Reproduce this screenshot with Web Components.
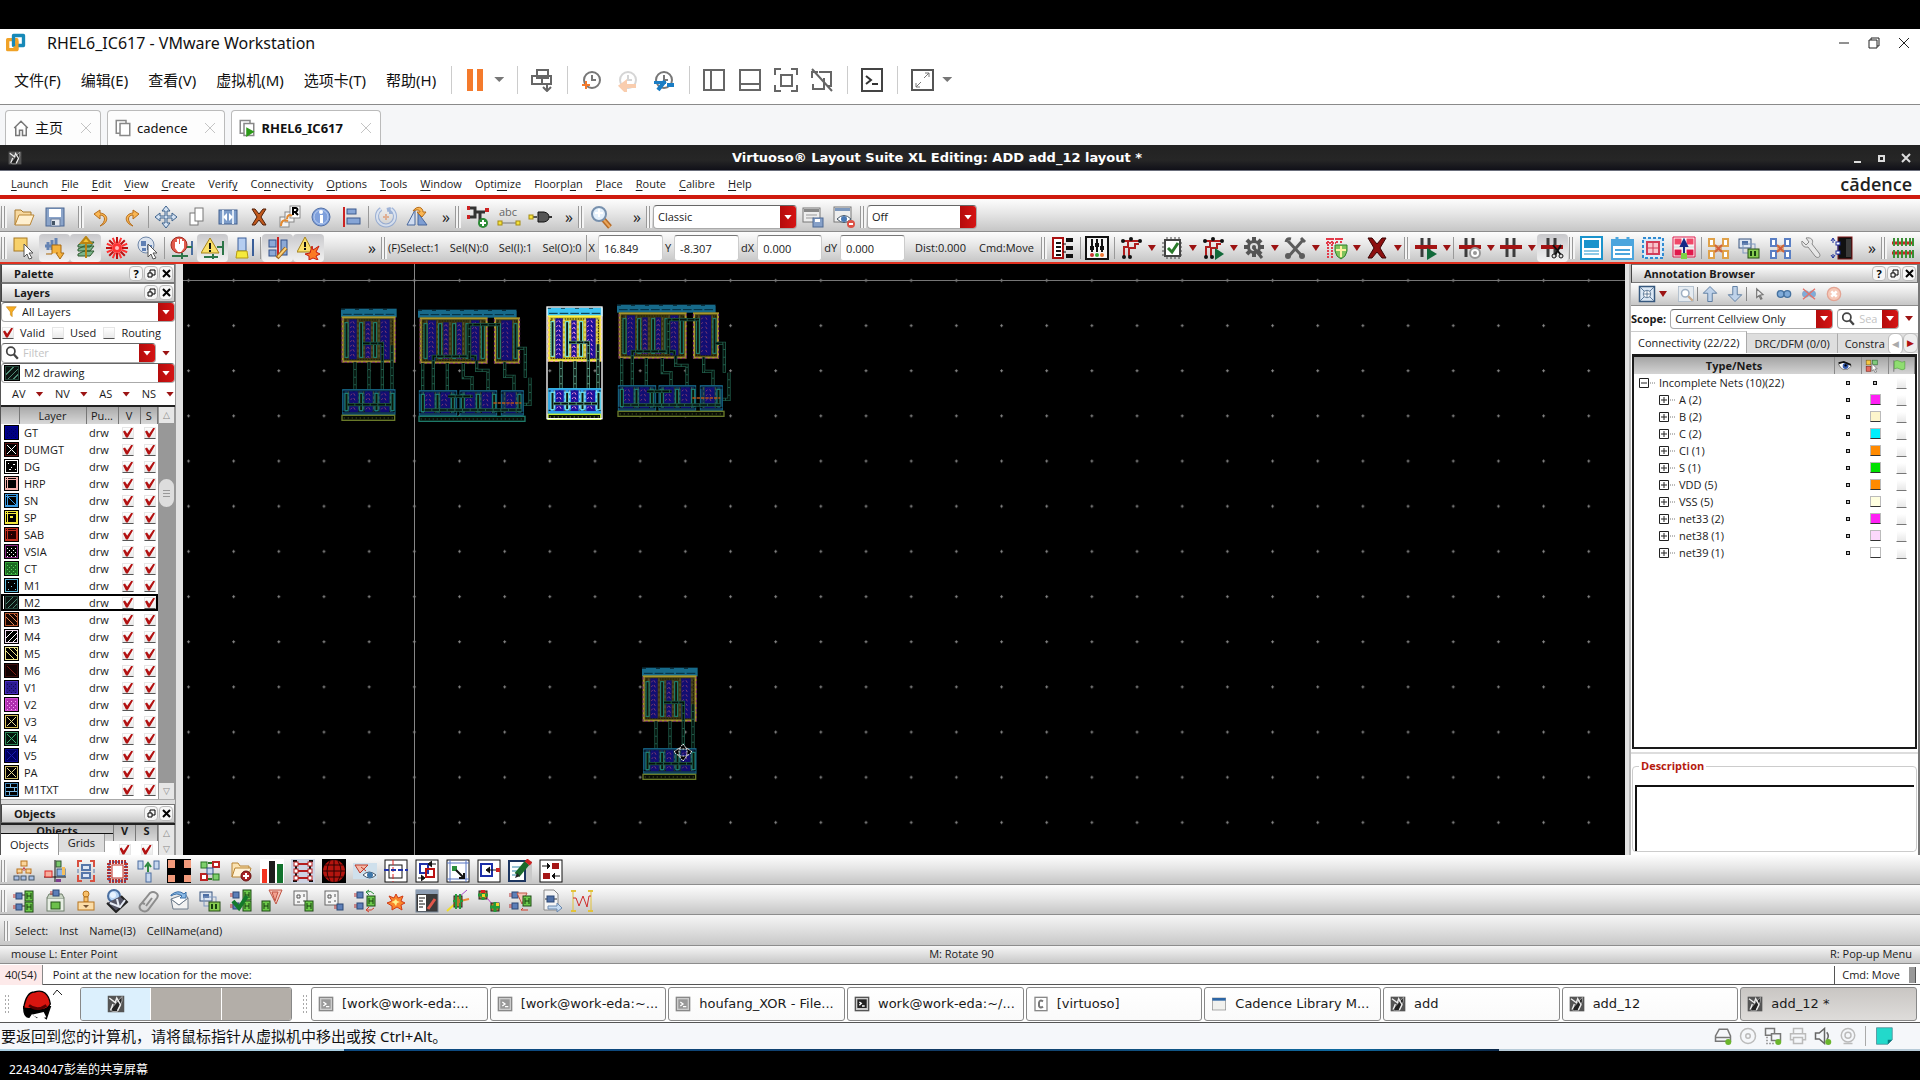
<!DOCTYPE html>
<html lang="zh-CN">
  <head>
    <meta charset="utf-8">
    <title>RHEL6_IC617 - VMware Workstation</title>
    <meta name="viewport" content="width=device-width, initial-scale=1">
    <style>
      html,
      body {
        margin: 0;
        padding: 0;
        height: 100%;
        background: #000;
      }
      body {
        display: flex;
        flex-direction: column;
        overflow: hidden;
        font: 11px/16px "Open Sans", "Noto Sans", sans-serif;
        color: #1a1a1a;
      }
      .letterbox {
        height: 29px;
      }
      .work {
        flex: 1;
        min-height: 0;
        display: flex;
        background: #e4e4e4;
      }
      layout-canvas {
        flex: 1;
        min-width: 0;
      }
      .share {
        height: 29px;
        box-sizing: border-box;
        padding: 8px 9px;
        border-top: 2px solid #000;
        background: #000;
        color: #fff;
        font: 12px/18px "Noto Sans", "Noto Sans CJK SC", sans-serif;
      }
    </style>
  </head>
  <body>
    <div class="letterbox"></div>
    <vm-title>RHEL6_IC617 - VMware Workstation</vm-title>
    <vm-menu></vm-menu>
    <vm-tabs></vm-tabs>
    <app-title>Virtuoso® Layout Suite XL Editing: ADD add_12 layout *</app-title>
    <app-menu></app-menu>
    <tool-bar tall>
      <tool-strip items="# folder save _ # undo redo | move copy stretch delete rcopy info align | rotate flip >> # create abc pin >> # zoom _ >> #"></tool-strip>
      <drop-down label="Workspace" value="Classic" size="wide"></drop-down>
      <tool-strip items="wssave wsview #"></tool-strip>
      <drop-down label="Filter" value="Off" size="mid"></drop-down>
    </tool-bar>
    <tool-bar edge>
      <tool-strip items="# select route* layers* burst lasso | stop warn* lamp | slice* spark* ___ >> #"></tool-strip>
      <cursor-readout></cursor-readout>
      <tool-strip items="# list | sliders | wire+ chip+ wirego+ gear+ tools+ guard+ cross+ # busgo+ | busgear+ bus+ buscut* # form calendar dashed quad | nodesa stack nodesb wrench black >> # comb"></tool-strip>
    </tool-bar>
    <div class="work">
      <layer-palette></layer-palette>
      <layout-canvas></layout-canvas>
      <annotation-browser></annotation-browser>
    </div>
    <tool-bar>
      <tool-strip items="# tree place brackets ring arrange plus corners newfolder bars ladder globe eye cutbox swap diag entry edit redarrows"></tool-strip>
    </tool-bar>
    <tool-bar>
      <tool-strip items="# pair carton stamp spy clip mail stack tick cone doc1 doc2 recycle bang terminal flash linkup conepair docpin pulse"></tool-strip>
    </tool-bar>
    <status-rows></status-rows>
    <task-bar></task-bar>
    <vm-status>要返回到您的计算机，请将鼠标指针从虚拟机中移出或按 Ctrl+Alt。</vm-status>
    <div class="share">22434047彭差的共享屏幕</div>

    <script>
      // ---- tiny svg helpers, all icons live on a 24 x 24 grid ----
      const R = (x, y, w, h, f = 'none', s = 'none', sw = 1) =>
        `<rect x="${x}" y="${y}" width="${w}" height="${h}" fill="${f}" stroke="${s}" stroke-width="${sw}"/>`
      const P = (d, s = 'none', f = 'none', sw = 1, extra = '') =>
        `<path d="${d}" stroke="${s}" fill="${f}" stroke-width="${sw}" ${extra}/>`
      const C = (x, y, r, f = 'none', s = 'none', sw = 1) =>
        `<circle cx="${x}" cy="${y}" r="${r}" fill="${f}" stroke="${s}" stroke-width="${sw}"/>`

      const mosfet = (x, y) => R(x, y, 8, 10, '#6cc94a', '#1c4a14') + P(`M${x + 2} ${y + 2}v6M${x + 6} ${y + 2}v6M${x + 2} ${y + 5}h4`, '#173f10')
      const plug = (x, y) => P(`M${x - 3} ${y + 2}h3M${x - 3} ${y + 4}h3`, '#b33') + R(x, y, 6, 6, '#5d7fb8', '#2c4876')
      const arrow = P('M12 8l9 9-4 0 3 5-3 1-2-5-3 3z', '#555', '#fff')
      const busBase = P('M1 11h22', '#a31414', 'none', 4) + P('M8 2v19M15 2v19', '#3c3c3c', 'none', 3) + R(6, 9, 12, 4, '#a31414')
      const wireBase = P('M5 21V11h4V5h13M10 20v-8h6V8h4', '#b01d1d', 'none', 2) + P('M3 5h6', '#b01d1d', 'none', 2) + C(4, 5, 2, '#111') + C(12, 3, 2, '#111') + C(21, 5, 2, '#111') + C(5, 21, 2, '#111') + C(11, 21, 2, '#111')
      const clock = C(12, 12, 8, '#fff', '#777', 2) + P('M12 7v5h4', '#777', 'none', 2)
      const nodes = col => R(3, 3, 5, 7, '#fff', col, 2) + R(17, 3, 5, 7, '#fff', col, 2) + R(3, 15, 5, 7, '#fff', col, 2) + R(17, 15, 5, 7, '#fff', col, 2) + P('M9 9l7 7M16 9l-7 7', '#d4593e', 'none', 2) + R(10, 10, 5, 5, 'none', '#c73', 1)
      const virt = R(1, 1, 22, 22, '#555') + P('M4 20L20 2V8L14 22H8z', '#ccc', '#222') + P('M3 4l8 6 2-6 5 9-4 8M8 12l-3 8', '#eee', 'none', 2)

      const ICONS = {
        folder: P('M3 20V5h6l2 2h8v4', '#a97a2f', '#f7d9a0') + P('M3 20l4-10h15l-4 10z', '#b98534', '#fff0d0'),
        save: R(3, 3, 18, 18, '#8ba4c9', '#4b6792') + R(6, 4, 12, 8, '#fff') + R(8, 14, 9, 7, '#e4e8ef', '#6a7fa0') + R(9, 16, 3, 4, '#456'),
        undo: P('M11 21c6-4 6-11 0-11v4L5 9l6-4v3c9 1 9 10 0 13z', '#b66d1b', '#f9b653'),
        redo: P('M13 21c-6-4-6-11 0-11v4l6-5-6-4v3c-9 1-9 10 0 13z', '#b66d1b', '#f9b653'),
        move: P('M12 1l4 5h-3v5h5V8l5 4-5 4v-3h-5v5h3l-4 5-4-5h3v-5H6v3l-5-4 5-4v3h5V6H8z', '#3d628d', '#d6e3f2'),
        copy: R(5, 8, 8, 12, '#fff', '#777', 1) + R(10, 3, 8, 13, '#fff', '#777', 1),
        stretch: R(3, 5, 18, 14, '#7c9cc9', '#42618f') + P('M7 5v14M17 5v14', '#dde8f5', 'none', 2) + P('M11 8l-4 4 4 4zM13 8l4 4-4 4z', 'none', '#fff'),
        delete: P('M5 4l3 0 4 5 4-5h3l-5 8 5 8h-3l-4-5-4 5H5l5-8z', '#50200a', '#c2591c'),
        rcopy: R(2, 12, 9, 10, '#f3f3f3', '#888') + R(7, 7, 9, 10, '#f3f3f3', '#888') + R(12, 1, 10, 12, '#fff', '#888') + P('M15 10V3h3q3 1 0 4h-3M17 7l3 3', '#000', 'none', 2) + P('M3 21c0-5 3-7 7-5M9 14c0-4 3-5 5-3', '#e28a32', 'none', 2),
        info: C(12, 12, 9, '#7fa0dc', '#5270a6', 1) + C(12, 12, 7, 'none', '#b8cdf0', 1) + R(11, 10, 3, 8, '#fff') + C(12, 7, 2, '#fff'),
        align: P('M4 2v20', '#c22', 'none', 2) + R(7, 4, 9, 5, '#86a5d6', '#3d5b8e') + R(7, 13, 13, 6, '#86a5d6', '#3d5b8e'),
        rotate: '<g opacity=".7">' + P('M7 4a9 9 0 1 0 10 0M17 4l-4 1M17 4l0 5', '#7d9bcf', 'none', 4) + P('M7 4a9 9 0 1 0 10 0', '#d7e3f6', 'none', 2) + P('M12 9v6M9 12h6', '#e09b74', 'none', 2) + '</g>',
        flip: P('M2 20L10 5v15z', '#47669c', '#d0dcf0') + P('M13 8v12h9z', '#47669c', '#7e9ed3') + P('M8 6c4-6 10-4 10 1l3 0-4 5-5-5h3c0-2-3-3-7-1z', '#b66d1b', '#f9b653'),
        create: P('M2 3h7v9H2M9 7h10M14 7v8h4', '#333', 'none', 3) + R(1, 1, 3, 4, '#c22') + R(1, 10, 3, 4, '#c22') + R(19, 3, 4, 4, '#c22') + C(17, 18, 5, '#2a8a34') + P('M17 15v6M14 18h6', '#fff', 'none', 2),
        abc: `<text x="2" y="11" font-family="Open Sans" font-size="11" fill="#666">abc</text>` + P('M4 18h16', '#777', 'none', 1) + R(1, 16, 4, 4, '#f5e23a', '#a58b13') + R(19, 16, 4, 4, '#f5e23a', '#a58b13'),
        pin: P('M1 12h8', '#555', 'none', 2) + R(1, 10, 4, 4, '#f5e23a', '#a58b13') + P('M10 7h6q5 1 5 5t-5 5h-6z', '#111', '#555') + P('M21 12h3', '#333', 'none', 2),
        zoom: P('M14 14l7 8', '#b56a26', 'none', 5) + P('M14 14l7 8', '#eaa65b', 'none', 2) + C(10, 9, 7, '#e4f0fb', '#7790ad', 2) + P('M6 8h8M10 4v8', '#fff', 'none', 2),
        wssave: R(2, 3, 17, 14, '#eee', '#777') + R(3, 4, 15, 3, '#888') + P('M5 10h11M5 13h8', '#999') + R(12, 13, 10, 9, '#86a0c8', '#4d6893') + R(14, 14, 5, 3, '#fff'),
        wsview: R(2, 2, 17, 15, '#eee', '#777') + R(3, 3, 15, 3, '#7d98bd') + P('M5 14q7-7 14 0-7 7-14 0z', '#456', '#fff') + C(12, 14, 3, '#4a79b5') + C(19, 19, 4, '#db5146') + R(17, 18, 4, 2, '#fff'),
        select: R(2, 2, 13, 13, '#f7d16b', '#a87922') + arrow,
        route: P('M2 10h13M5 6v8M9 4v10M13 2v10', '#6583b3', 'none', 3) + P('M3 18h6v-9h9v8h3l-4 6-4-6h2', '#a86b14', '#f5b23d', 1),
        layers: P('M4 18l6-3h10l-4 5H4zM4 13l6-3h10l-4 5H4zM4 9l6-3h10l-4 5H4z', '#2e5b2e', '#7cb48c') + P('M12 22V6M12 1l-5 6h10z', '#b98413', '#f6c436', 2),
        burst: `<g stroke="#f22" stroke-width="2">${[...Array(16)].map((_, i) => `<path d="M12 7V1" stroke="${i % 2 ? '#f33' : '#b11'}" transform="rotate(${i * 22.5} 12 12)"/>`).join('')}</g>` + C(12, 12, 5, '#f33') + C(12, 12, 2, '#fbb'),
        lasso: C(10, 9, 8, '#dce4ef', '#6f87a8', 1) + R(5, 5, 5, 5, '#5f80b5') + R(11, 9, 5, 5, '#5f80b5') + R(6, 12, 4, 3, '#5f80b5') + arrow,
        stop: P('M2 20h16M12 17v6', '#2c7548', 'none', 2) + P('M22 5v14', '#4b6fa0', 'none', 2) + C(9, 9, 8, '#e05b4b', '#a02a20') + P('M6 10V6M8 9V3M11 9V3M13 9V5', '#fff', 'none', 2) + P('M5 8h9v4l-3 4H8l-3-4z', 'none', '#fff') + P('M17 11h5', '#2c7548', 'none', 2),
        warn: P('M9 2l9 15H0z', '#a5821b', '#fae06a') + R(8, 7, 2, 6, '#111') + R(8, 14, 2, 2, '#111') + P('M16 11h6M22 5v14M3 21h14M12 18v5', '#2c7548', 'none', 2),
        lamp: R(6, 2, 8, 13, '#b5cdf0', '#3b5f99') + P('M5 15h10l1 7H4z', '#b69b12', '#f5e93c') + P('M21 3v17', '#3b5f99', 'none', 2),
        slice: R(3, 4, 7, 7, '#8ca9d6', '#33518a') + R(3, 14, 7, 6, '#8ca9d6', '#33518a') + R(15, 4, 6, 15, '#8ca9d6', '#33518a') + P('M12 1v21', '#c22', 'none', 2) + P('M11 22l9-10', '#a36716', 'none', 4) + P('M12 21l8-9', '#fbd27a', 'none', 2),
        spark: P('M8 1l8 15H0z', '#a5821b', '#fae06a') + R(7, 6, 2, 5, '#111') + R(7, 12, 2, 2, '#111') + P('M15 10l1 4 6-4-3 6 4 2-4 2 2 4-5-2-4 2 0-4-4-2 5-1z', '#c41b12', '#fb7a25'),
        list: R(2, 2, 10, 20, '#fff', '#a11', 2) + P('M5 7h5M5 11h5M5 15h5M5 19h5', '#111', 'none', 2) + P('M15 4h7M15 12h7M15 20h7', '#111', 'none', 4) + P('M12 8h3M12 16h3', '#111'),
        sliders: R(1, 1, 22, 22, '#f4f4f4', '#111', 2) + P('M7 3v13M12 3v13M17 3v13', '#111', 'none', 2) + P('M5 12h4M10 9h4M15 12h4', '#111', 'none', 4) + C(7, 19, 2, '#c33') + C(12, 19, 2, '#3a3') + C(17, 19, 2, '#e73'),
        wire: wireBase,
        wirego: wireBase + P('M14 12l9 6-9 6z', 'none', '#12693a'),
        chip: P('M2 7h20M2 11h20M2 15h20M2 19h20M7 1v22M11 1v22M15 1v22M19 1v22', '#444', 'none', 1) + R(5, 4, 15, 16, '#fff', '#444', 2) + P('M8 12l4 4 6-9', '#2a7a2a', 'none', 3),
        gear: `<g fill="#555">${[0, 45, 90, 135].map(a => `<rect x="10" y="1" width="4" height="20" transform="rotate(${a} 12 11)"/>`).join('')}</g>` + C(12, 11, 7, '#555') + C(12, 11, 4, '#ddd') + P('M11 11l9 11', '#555', 'none', 3) + C(12, 11, 2, '#555'),
        tools: P('M5 5l14 15M20 4L6 20', '#5c5c5c', 'none', 3) + P('M3 6q1-4 5-3M18 2l4 4', '#5c5c5c', 'none', 3) + C(5, 20, 3, '#5c5c5c') + C(19, 20, 3, '#5c5c5c'),
        guard: P('M2 3h17M2 7h10M4 2v20M8 2v20M13 2v5M17 2v5', '#e23a4a', 'none', 2, 'stroke-dasharray="2 1"') + P('M11 9h12v6q-1 6-6 8-5-2-6-8z', '#33812d', '#80c45b') + P('M17 10v11M12 14h10', '#fff0a0', 'none', 2),
        cross: P('M3 2h4l5 6 5-6h4l-6 10 6 10h-4l-5-6-5 6H3l6-10z', '#3c0505', '#8d0f0f'),
        busgo: busBase + P('M13 12l10 6-10 6z', 'none', '#12693a'),
        busgear: busBase + C(17, 17, 5, '#fff', '#999', 2) + C(17, 17, 2, '#999'),
        bus: busBase,
        buscut: busBase + P('M13 9l8 10M21 9l-6 10', '#111', 'none', 2) + C(14, 20, 2, '#ddd', '#111', 1) + C(21, 20, 2, '#ddd', '#111', 1),
        form: R(2, 1, 21, 22, '#fff', '#1a93cc', 2) + R(5, 4, 15, 8, '#1a93cc') + P('M5 15h15M5 18h15', '#1a93cc', 'none', 1),
        calendar: R(2, 4, 21, 19, '#fff', '#4ba5dd', 2) + R(2, 4, 21, 6, '#4ba5dd') + P('M7 1v5M18 1v5', '#4ba5dd', 'none', 3) + P('M5 14h15M5 18h15', '#4ba5dd', 'none', 2),
        dashed: P('M2 2h20v20H2z', '#318bd2', '#d7ecfb', 2, 'stroke-dasharray="3 2"') + R(6, 6, 12, 12, '#f8c5cc', '#d33d58', 2) + P('M6 12h12M12 6v12', '#d33d58', 'none', 1),
        quad: R(2, 2, 8, 7, '#f04868', '#fff') + R(14, 2, 8, 7, '#f04868', '#fff') + R(2, 13, 8, 7, '#e0184b', '#fff') + R(14, 13, 8, 7, '#e0184b', '#fff') + P('M1 1h22v20H1z', '#e0184b', 'none', 1) + P('M12 18V8M12 4l-3 6h6z', '#172a86', '#172a86', 2) + R(9, 17, 6, 6, '#7fd046'),
        nodesa: nodes('#e0a24a'),
        nodesb: nodes('#5a7fc4'),
        stack: R(2, 3, 12, 9, '#dfe7f3', '#38547f', 1) + R(5, 5, 6, 4, '#4e6fa5') + R(6, 8, 12, 9, 'none', '#7e97bf', 1) + R(11, 13, 11, 9, '#86cb50', '#274d17') + P('M14 15v5M18 15v5', '#173f10', 'none', 2),
        wrench: P('M3 5l4 4 3-3-3-4c5-1 8 2 6 6l7 9c3 4-2 6-4 3l-7-9c-4 1-7-2-6-6z', '#888', '#e7e7e7'),
        black: R(8, 1, 14, 22, '#111', '#801616', 1) + P('M16 3h5v18h-5z', 'none', '#3a3a3a') + P('M3 3v4M3 22v-4M1 5l2-3 2 3M1 19l2 3 2-3M8 6v13', '#1d2f9c', 'none', 1) + R(6, 6, 4, 3, '#fff', '#1d2f9c') + R(6, 15, 4, 3, '#fff', '#1d2f9c'),
        comb: P('M1 7h22M1 17h22', '#c22', 'none', 3) + P('M3 2v20M7 2v20M11 2v20M15 2v20M19 2v20M22 2v20', '#3b8f35', 'none', 2, 'stroke-dasharray="8 4"'),
        tree: P('M12 8v4M5 15l7-6 7 6M4 17v3M19 17v3', '#c44') + R(9, 2, 6, 5, '#fbd59b', '#b9741f') + R(5, 10, 5, 4, '#fbd59b', '#b9741f') + R(14, 10, 5, 4, '#fbd59b', '#b9741f') + R(2, 17, 5, 4, '#a9c0e6', '#456') + R(9, 17, 5, 4, '#a9c0e6', '#456') + R(17, 17, 5, 4, '#a9c0e6', '#456'),
        place: P('M12 1v22M1 18h22', '#111') + R(2, 12, 7, 6, '#f7ad9c', '#d22', 1) + R(13, 2, 5, 6, '#79c86b', '#353') + R(14, 10, 8, 7, '#8fb4e8', '#357') + R(19, 8, 3, 8, '#f6c05d') + R(13, 20, 5, 3, '#803f91'),
        brackets: P('M8 2H4v6M4 16v6h4M16 2h4v6M20 16v6h-4', '#d95040', 'none', 2) + P('M4 10v4M20 10v4', '#5677aa', 'none', 1) + R(8, 6, 8, 5, '#dfe8f5', '#5677aa', 2) + R(8, 14, 8, 5, '#dfe8f5', '#5677aa', 2),
        ring: P('M4 3h17v19H4z', '#c3352b', 'none', 4, 'stroke-dasharray="2 1"') + P('M4 3h17v19H4z', '#263d9c', 'none', 1, 'stroke-dasharray="2 2"') + R(7, 6, 11, 13, '#fff', '#c3352b'),
        arrange: R(2, 2, 5, 8, '#c7d7ee', '#4b6c9f') + R(18, 2, 5, 8, '#c7d7ee', '#4b6c9f') + R(10, 14, 5, 9, '#c7d7ee', '#4b6c9f') + P('M12 13V6M9 8l3-4 3 4', '#2f8a41', 'none', 2),
        plus: R(0, 0, 24, 24, '#000') + R(1, 1, 7, 8, '#f29a7b') + R(17, 1, 7, 8, '#f29a7b') + R(1, 16, 7, 7, '#f29a7b') + R(17, 16, 7, 7, '#f29a7b'),
        corners: R(3, 3, 6, 6, '#7ed06c', '#297422', 1) + R(15, 3, 6, 5, '#fff', '#b22', 2) + R(3, 15, 6, 6, '#fff', '#b22', 2) + R(9, 9, 6, 6, '#c8d6ee', '#35558e', 1) + R(15, 15, 6, 6, '#7ed06c', '#297422', 1) + P('M10 4h4M10 20h4', '#297422', 'none', 2),
        newfolder: P('M3 18V4h6l2 3h9v5', '#b98534', '#fbe3b2') + P('M3 18l3-9h16l-3 9z', '#b98534', '#fff3d8') + C(17, 17, 5, '#a92424', '#611') + P('M17 14v6M14 17h6', '#fff', 'none', 2),
        bars: R(0, 0, 24, 24, '#fff') + R(2, 10, 5, 14, '#f4331f') + R(9, 2, 6, 22, '#1d1d1d') + R(17, 5, 6, 19, '#12722c'),
        ladder: R(0, 0, 24, 24, '#cdd3e3') + P('M5 1v22M19 1v22', '#111', 'none', 2) + P('M5 5h14M5 12h14M5 19h14', '#b51e1e', 'none', 2) + P('M2 2h4M18 2h4M2 22h4M18 22h4', '#111', 'none', 2) + [5, 12, 19].map(y => R(3, y - 2, 4, 4, '#fff', '#b51e1e') + R(17, y - 2, 4, 4, '#fff', '#b51e1e')).join(''),
        globe: R(0, 0, 24, 24, '#000') + C(12, 12, 11, '#b3150f') + P('M12 1v22M1 12h22M3 6h18M3 18h18M8 2q-6 10 0 20M16 2q6 10 0 20', '#2d0302', 'none', 1),
        eye: R(0, 4, 24, 16, '#cfe0ec') + P('M2 6h13l-8 8z', '#bf3a28', '#f4b9a8', 1) + P('M10 16q6-6 13 0-6 6-13 0z', '#456', '#fff') + C(17, 16, 3, '#3f78aa') + P('M8 8l5 4', '#bf3a28', 'none', 1),
        cutbox: R(1, 1, 22, 22, '#fff', '#111', 1) + R(5, 6, 13, 13, 'none', '#111', 1) + P('M9 1v22', '#d22', 'none', 1, 'stroke-dasharray="5 2"') + P('M0 11h24', '#23a', 'none', 2, 'stroke-dasharray="5 2"'),
        swap: R(1, 1, 22, 22, '#fff', '#111', 1) + R(5, 5, 8, 9, '#fff', '#23a', 2) + R(11, 10, 8, 8, 'none', '#b11', 2) + P('M21 5h-6M17 2l-4 3 4 3M3 19h5M6 16l4 3-4 3', '#111', '#111', 1),
        diag: R(1, 1, 22, 22, '#fff', '#111', 1) + P('M4 1v22M20 1v22M1 4h22M1 20h22', '#5976c4', 'none', 1) + R(6, 7, 5, 5, '#2c8f3c') + P('M10 11l8 8M18 14v5h-5', '#111', 'none', 2),
        entry: R(1, 1, 22, 22, '#fff', '#111', 1) + R(4, 5, 11, 12, '#fff', '#1b2ea8', 2) + P('M19 11h-8M13 8l-4 3 4 3', '#111', '#111', 1) + R(19, 9, 4, 4, '#c22'),
        edit: R(12, 2, 12, 22, '#c9c9c9') + R(1, 2, 16, 20, '#fff', '#1c3560', 2) + P('M4 8h8M4 12h6M4 16h4', '#38a', 'none', 1) + P('M9 16L19 4', '#1a6b2a', 'none', 6) + P('M18 1l5 4', '#c22', 'none', 4) + P('M7 19l2-5 3 3z', 'none', '#222'),
        redarrows: R(1, 1, 22, 22, '#fff', '#111', 1) + R(13, 4, 7, 6, '#a61616') + R(4, 14, 7, 6, '#a61616') + P('M3 7h7M8 4l3 3-3 3M21 17h-7M16 14l-3 3 3 3', '#111', '#111', 1),
        pair: plug(4, 4) + plug(4, 15) + mosfet(13, 2) + mosfet(13, 13) + P('M10 6h3M10 17h3', '#333'),
        carton: R(4, 9, 17, 13, '#e8efe5', '#6f7f6c') + P('M4 9l2-4h13l2 4', '#6f7f6c', '#c8d4c3') + R(8, 13, 9, 7, '#6cc04b', '#24551a') + plug(10, 1),
        stamp: C(12, 5, 3, '#f8c06a', '#b8741c') + R(10, 8, 4, 5, '#f8c06a', '#b8741c') + R(4, 13, 16, 8, '#fbdda8', '#b8741c') + P('M9 16h6l-3 3z', 'none', '#753'),
        spy: C(9, 7, 6, '#b9d5f4', '#4b6fa0', 2) + P('M2 14l9 9 11-10-6-6', '#222', '#556', 2) + P('M5 14l10 4 5-7M12 10l2 8', '#e6ebf5', 'none', 2) + C(8, 6, 3, '#e8f3ff'),
        clip: P('M9 15l-3-1 8-10q3-2 6 0 3 2 1 5L12 21q-3 3-7 0-3-3 0-6l4-5M10 17l6-8', '#8d8d8d', 'none', 2),
        mail: P('M4 10l8 6 9-7v11H6z', '#6e7c8c', '#f2f2f2') + P('M4 10L18 5l3 4-9 7z', '#6e7c8c', '#fff') + P('M4 6q7-6 13-1l2-2v6h-6l2-2q-5-4-11 0z', '#3b6ea5', '#8cbbe8'),
        tick: plug(4, 3) + plug(4, 14) + mosfet(14, 1) + mosfet(14, 12) + P('M4 12l6 7L18 7', '#137a2a', 'none', 4),
        cone: P('M9 1h13l-6 14z', '#c05545', '#f6c6bb') + P('M12 3h6l-3 9z', '#c05545', '#f3a190') + mosfet(2, 12),
        doc1: R(3, 2, 13, 14, '#f5f5f5', '#666', 1) + P('M6 6h3v3H6zM6 13h3M13 5v3M13 11v2', '#555', 'none', 1) + mosfet(14, 12),
        doc2: R(3, 2, 13, 14, '#f5f5f5', '#666', 1) + P('M6 6h3v3H6zM6 13h3M13 5v3M13 11v2', '#555', 'none', 1) + plug(15, 15),
        recycle: plug(4, 3) + plug(4, 14) + mosfet(14, 7) + P('M21 5q-3-4-7-2M16 1l-3 2 3 3', '#2c8f3c', 'none', 1) + P('M21 19q-2 3-7 2M16 18l-3 3 3 2', '#d33c28', 'none', 1),
        bang: P('M12 5l2 4 5-2-2 5 4 2-4 2 1 5-5-3-5 3 0-4-5-3 5-2-3-5 5 2z', '#d13a16', '#f9852b') + P('M12 10l1 2 3 1-3 1-1 3-2-3-3-1 3-1z', 'none', '#fff08a'),
        terminal: R(1, 1, 22, 22, '#3a3a3a', '#7b8a9c', 1) + R(1, 1, 22, 4, '#8c9db3') + R(3, 6, 8, 16, '#fff') + P('M4 9h6M4 12h4M4 15h6M4 18h4', '#111') + P('M13 20l7-10', '#e2574a', 'none', 3),
        flash: P('M13 8L21 1', '#a74ac9', 'none', 1) + P('M1 22l10-9', '#f2df2a', 'none', 2) + P('M14 12l9-2', '#f08a3a', 'none', 2) + R(8, 7, 8, 11, '#b9772a', '#222') + P('M10 5v15M14 5v15M7 12h10', '#239b3a', 'none', 2) + R(11, 10, 3, 4, '#b9772a'),
        linkup: R(2, 2, 8, 8, '#b9772a', '#222') + P('M6 1v10M1 6h10', '#239b3a', 'none', 3) + P('M10 9l6 7', '#b83fc4', 'none', 1) + R(14, 14, 8, 8, '#b9772a', '#222') + P('M18 13v10M13 18h10', '#239b3a', 'none', 3) + R(4, 1, 4, 3, '#d22') + R(19, 14, 3, 3, '#f4d42a') + R(5, 5, 3, 3, '#f4d42a'),
        conepair: plug(4, 3) + plug(4, 14) + P('M9 4h10l-5 11z', '#c05545', '#f6c6bb') + mosfet(15, 7) + P('M20 21h-7l2-2', '#d33c28', 'none', 1),
        docpin: P('M5 1h10l4 4v16H5z', '#888', '#f5f5f5') + P('M6 10h12', '#333', 'none', 1) + R(8, 7, 7, 6, '#4e6fa5', '#2c4876') + P('M9 17h9v-3l5 5-5 4v-3H9z', '#6a88ad', '#c7dcf2'),
        pulse: P('M3 2v20M21 2v20', '#e2c23a', 'none', 1) + P('M1 2h5M1 22h5M18 2h5M18 22h5', '#e2c23a', 'none', 2) + P('M3 9h3l3 8 4-10 4 11 2-11h2', '#cf2b2b', 'none', 1),
        vmware: P('M2 8h11v12H2z', '#f0a227', 'none', 4, 'stroke-linejoin="round"') + P('M9 3h12v12H9z', '#1789b8', 'none', 4, 'stroke-linejoin="round"') + P('M9 18h4V10', '#f0a227', 'none', 4),
        pause: R(4, 1, 6, 22, '#f47a2c') + R(14, 1, 6, 22, '#f47a2c'),
        send: P('M7 2h11v8H7zM2 8h10v8H2zM12 8h9v8h-9zM17 15v7M13 19l4 4 4-4', '#666', 'none', 2),
        snap: clock + P('M2 17h8M6 13v8', '#f47a2c', 'none', 2),
        snapback: `<g opacity=".3">${clock}</g>` + P('M20 18H6M9 15l-4 3 4 4z', '#f9cdae', '#f9cdae', 4),
        snapman: clock + R(2, 13, 12, 3, '#1a7dc4') + P('M6 22l7-9M15 17h7', '#1a7dc4', 'none', 4),
        paneleft: P('M2 2h20v20H2zM9 2v20', '#666', 'none', 2),
        panebottom: P('M2 2h20v20H2zM2 16h20', '#666', 'none', 2),
        fit: R(7, 7, 11, 11, 'none', '#666', 2) + P('M1 7V1h6M17 1h6v6M23 17v6h-6M7 23H1v-6', '#666', 'none', 2),
        nofit: P('M2 10V4h6M3 16v5h11V10M9 4h12v14h-4M2 1l20 22', '#666', 'none', 2),
        console: R(2, 1, 20, 22, '#fff', '#444', 2) + P('M6 8l5 4-5 4M12 16h6', '#333', 'none', 2),
        expand: R(2, 2, 21, 20, '#fff', '#555', 2) + P('M14 10l5-5M15 5h4v4M11 14l-5 5M6 15v4h4', '#777', 'none', 1),
        home: P('M3 12l9-9 9 9M5 11v11h5v-7h4v7h5V11', '#777', 'none', 2),
        pages: R(3, 2, 13, 17, '#fff', '#888', 2) + R(8, 6, 13, 16, '#fff', '#888', 2),
        pagesrun: R(3, 2, 13, 17, '#fff', '#888', 2) + R(8, 6, 13, 16, '#fff', '#888', 2) + P('M11 11l11 6-11 7z', 'none', '#2c9a18'),
        virt,
        filter: P('M4 3h17l-7 9v8l-3-3v-5z', '#c17d0e', '#f9ad1f'),
        mag: C(10, 9, 7, 'none', '#444', 3) + P('M15 14l7 8', '#444', 'none', 4),
        redhat: P('M2 14q0 8 4 8l2-3 4 3 3-2 4 3 3-9z', '#000', '#000') + P('M8 20l9-2 2 4-5 1z', 'none', '#fff') + P('M2 15q2-12 8-12 10-3 12 9-3 6-11 3-6 1-9 0z', '#000', '#d8150f') + P('M6 13q6 5 13 0', '#500', 'none', 2),
        term: R(2, 2, 20, 20, '#ccc', '#888', 2) + R(5, 5, 14, 14, '#999') + P('M8 9l4 3-4 3M12 16h5', '#fff', 'none', 2),
        termdark: R(2, 2, 20, 20, '#ccc', '#555', 2) + R(5, 5, 14, 13, '#222') + P('M8 9l3 2-3 3M12 15h4', '#fff', 'none', 2),
        virtdoc: R(3, 2, 18, 20, '#fff', '#888', 2) + P('M15 8q-5-3-6 2v5q2 4 6 1', '#777', 'none', 3),
        window: R(2, 3, 20, 18, '#f1f1ee', '#888', 1) + R(2, 3, 20, 4, '#2d66a5'),
        disk: P('M2 19V12l5-9h11l4 9v7zM2 14h20', '#777', 'none', 2) + C(19, 20, 4, '#6ab52c'),
        cd: C(12, 12, 10, 'none', '#bbb', 2) + C(12, 12, 3, 'none', '#bbb', 2),
        net: R(2, 2, 12, 9, 'none', '#777', 2) + R(10, 9, 12, 9, '#f5f7fa', '#777', 2) + P('M4 13v9h9', '#888', 'none', 2, 'stroke-dasharray="2 2"') + C(19, 20, 4, '#6ab52c'),
        printer: P('M6 9V2h12v7M6 17H2V9h20v8h-4M6 14h12v8H6z', '#bbb', 'none', 2),
        sound: P('M2 8h5l7-6v20l-7-6H2zM17 7q4 5 0 10', '#666', 'none', 2) + C(19, 20, 4, '#6ab52c'),
        cam: C(12, 11, 9, 'none', '#bbb', 2) + C(12, 11, 4, 'none', '#bbb', 2) + P('M6 22h12', '#bbb', 'none', 2),
        note: P('M2 1h21v16l-6 6H2z', '#4c8791', '#22d9cb', 1) + P('M17 23v-6h6z', 'none', '#087d80'),
        fitview: R(2, 2, 20, 20, '#dce8f5', '#36587e', 2) + P('M3 3l6 6M21 3l-6 6M3 21l6-6M21 21l-6-6', '#36587e', 'none', 1) + C(12, 12, 5, '#fff', '#36587e', 1) + P('M12 8v8M8 12h8', '#36587e', 'none', 1),
        fitpale: R(2, 2, 20, 20, '#e5ebf1', '#a6b6c6', 1) + C(11, 11, 5, '#fff', '#9fb0c3', 2) + P('M15 15l6 6', '#c9a98a', 'none', 3),
        up: P('M9 22V11H3l9-9 9 9h-6v11z', '#3f648f', '#bfd2e9'),
        down: P('M9 2v11H3l9 9 9-9h-6V2z', '#3f648f', '#bfd2e9'),
        pointer: P('M8 3v15l4-3 3 6 2-1-3-6 5-1z', '#777', '#eee', 2),
        blobs: C(7, 12, 5, '#7fabd9', '#44719f', 2) + C(17, 12, 5, '#7fabd9', '#44719f', 2),
        blobsx: C(7, 12, 5, '#7fabd9', '#8aa6c4') + C(17, 12, 5, '#7fabd9', '#8aa6c4') + P('M3 4l18 16M21 4L3 20', '#e4736b', 'none', 2),
        halt: C(12, 12, 10, '#f6c9b8', '#e3a595', 2) + P('M8 8l8 8M16 8l-8 8', '#fff', 'none', 4),
        view: P('M1 9q11-8 22 3-6 8-14 6Q4 16 1 9z', '#333', '#fff') + C(13, 12, 5, '#355bb0') + C(13, 11, 2, '#000') + P('M1 7l9-2 12 5', '#111', 'none', 3),
        picks: R(2, 2, 8, 8, '#f5c842', '#7c5b10') + R(13, 2, 8, 8, '#81c97c', '#27692a') + R(2, 13, 8, 8, '#e4695d', '#7c1c12') + arrow,
        flag: P('M3 2v20', '#888', 'none', 2) + P('M4 4q5-3 9 0t9 0v13q-5 3-9 0t-9 0z', '#4c9a37', '#8fdd70')
      }
      const icon = (name, size = 24) =>
        `<svg width="${size}" height="${size}" viewBox="0 0 24 24" aria-hidden="true">${ICONS[name]}</svg>`

      // base class: render() gives the shadow markup
      class Part extends HTMLElement {
        connectedCallback () {
          if (!this.shadowRoot) this.attachShadow({ mode: 'open' }).innerHTML = this.render()
        }
      }

      const button = `
        button { font: inherit; color: inherit; border: 0; padding: 0; background: none; }
        svg { display: block; }`
      const tick = `
        input[type=checkbox] { appearance: none; box-sizing: border-box; width: 12px; height: 12px; margin: 0; border: 1px solid #e6e6e6; border-bottom-color: #555; background: linear-gradient(#fff, #e8e8e8); display: block; }
        input[type=checkbox]:checked::before { content: ""; display: block; width: 10px; height: 10px; background: #b31212; clip-path: polygon(0 40%, 20% 30%, 42% 62%, 85% 0, 100% 10%, 48% 100%, 30% 100%); }`

      customElements.define('vm-title', class extends Part {
        render () {
          return `<style>
            :host { display: flex; align-items: center; gap: 21px; height: 28px; padding: 0 1px 0 6px; background: #fff; font: 16px/24px "Noto Sans", sans-serif; color: #111; }
            span { flex: 1; }
            ${button}
            button { width: 30px; display: grid; place-items: center; }
            div { display: flex; }
          </style>
          ${icon('vmware', 20)}<span><slot></slot></span>
          <div>
            <button aria-label="Minimize"><svg width="12" height="12"><path d="M1 6h10" stroke="#222"/></svg></button>
            <button aria-label="Restore"><svg width="12" height="12"><path d="M1 3h8v8H1zM3 3V1h8v8H9" fill="none" stroke="#222"/></svg></button>
            <button aria-label="Close"><svg width="12" height="12"><path d="M1 1l10 10M11 1L1 11" stroke="#222"/></svg></button>
          </div>`
        }
      })

      customElements.define('vm-menu', class extends Part {
        render () {
          const menus = ['文件(F)', '编辑(E)', '查看(V)', '虚拟机(M)', '选项卡(T)', '帮助(H)']
          const tools = '| pause v | send | snap snapback snapman | paneleft panebottom fit nofit | console | expand v'.split(' ')
          return `<style>
            :host { display: flex; align-items: center; box-sizing: border-box; height: 48px; padding: 0 14px 2px; background: #fff; border-bottom: 1px solid #8a8a8a; color: #111; font: 15px/24px "Noto Sans", "Noto Sans CJK SC", sans-serif; }
            nav { display: flex; gap: 20px; margin-right: 8px; }
            ${button}
            .tool { width: 36px; display: grid; place-items: center; }
            .tool.pause { width: 34px; }
            i { width: 1px; height: 28px; margin: 0 6px 0 7px; background: #ccc; }
            b { width: 10px; height: 5px; margin: 0 6px 0 2px; background: #777; clip-path: polygon(0 0, 100% 0, 50% 100%); }
          </style>
          <nav>${menus.map(m => `<button>${m}</button>`).join('')}</nav>
          ${tools.map(t => t === '|' ? '<i></i>' : t === 'v' ? '<b></b>' : `<button class="tool ${t}" aria-label="${t}">${icon(t)}</button>`).join('')}`
        }
      })

      customElements.define('vm-tabs', class extends Part {
        render () {
          const tab = (ic, text, cls) => `<div class="tab ${cls}">${icon(ic, 18)}<button>${text}</button><button class="x" aria-label="Close tab"><svg width="12" height="12"><path d="M1 1l10 10M11 1L1 11" stroke="#c4c4c4"/></svg></button></div>`
          return `<style>
            :host { display: flex; align-items: flex-end; gap: 6px; height: 40px; padding: 0 5px; background: #f5f6f8; font: 13px/20px "Noto Sans", "Noto Sans CJK SC", sans-serif; color: #111; }
            ${button}
            .tab { box-sizing: border-box; height: 35px; padding: 0 8px 0 6px; display: flex; align-items: center; gap: 5px; border: 1px solid #bbb; border-bottom: 0; border-radius: 4px 4px 0 0; background: #fdfdfd; }
            .home { font-size: 14px; }
            .on { font-weight: bold; background: #fff; }
            .x { margin-left: 12px; }
          </style>
          ${tab('home', '主页', 'home')}${tab('pages', 'cadence', '')}${tab('pagesrun', 'RHEL6_IC617', 'on')}`
        }
      })

      customElements.define('app-title', class extends Part {
        render () {
          return `<style>
            :host { display: grid; grid-template-columns: 1fr auto 1fr; align-items: center; height: 25px; padding: 0 8px; border-bottom: 1px solid #6b6f7c; background: linear-gradient(#222, #262626 60%, #101018); color: #fff; font: bold 13px/20px "DejaVu Sans", sans-serif; }
            ${button}
            span { margin-right: 46px; }
            div { display: flex; justify-content: flex-end; gap: 12px; }
          </style>
          ${icon('virt', 14)}<span><slot></slot></span>
          <div>
            <button aria-label="Minimize"><svg width="12" height="12"><path d="M2 10h7" stroke="#ddd" stroke-width="2"/></svg></button>
            <button aria-label="Maximize"><svg width="12" height="12"><path d="M3 4h5v5H3z" fill="none" stroke="#ddd" stroke-width="2"/></svg></button>
            <button aria-label="Close"><svg width="12" height="12"><path d="M2 2l8 8M10 2l-8 8" stroke="#ddd" stroke-width="2"/></svg></button>
          </div>`
        }
      })

      customElements.define('app-menu', class extends Part {
        render () {
          // an underscore stands before the accelerator letter
          const menus = '_Launch _File _Edit _View _Create Verif_y Co_nnectivity _Options _Tools _Window Opti_mize Floorpl_an _Place _Route _Calibre _Help'.split(' ')
          return `<style>
            :host { display: flex; align-items: center; justify-content: space-between; box-sizing: border-box; height: 28px; padding: 1px 8px 0 11px; background: #fff; border-bottom: 4px solid #cf1a0e; }
            nav { display: flex; gap: 13px; }
            ${button}
            u { text-underline-offset: 2px; }
            strong { font: 600 18px/22px "Open Sans", sans-serif; color: #222; }
          </style>
          <nav>${menus.map(m => `<button>${m.replace(/_(.)/, '<u>$1</u>')}</button>`).join('')}</nav>
          <strong>cādence</strong>`
        }
      })

      customElements.define('tool-bar', class extends Part {
        render () {
          return `<style>
            :host { display: flex; align-items: center; box-sizing: border-box; height: 30px; padding-top: 2px; flex: none; overflow: hidden; border-bottom: 1px solid #8d8d8d; background: linear-gradient(#fdfdfd, #e6e6e6 45%, #c6c6c6); }
            :host([tall]) { height: 33px; padding-top: 4px; }
            :host([edge]) { height: 32px; border-bottom: 2px solid #e0301f; }
          </style><slot></slot>`
        }
      })

      customElements.define('tool-strip', class extends Part {
        render () {
          const cell = t => {
            if (t === '#') return '<i class="grip"></i>'
            if (t === '|') return '<i class="sep"></i>'
            if (/^_+$/.test(t)) return `<i class="${t.length > 1 ? 'gap big' : 'gap'}"></i>`
            if (t === '>>') return '<button class="more" aria-label="More tools">»</button>'
            const name = t.replace(/[*+]/, '')
            return `<button class="${t.endsWith('*') ? 'on' : ''}" aria-label="${name}">${icon(name)}</button>` +
              (t.endsWith('+') ? `<button class="drop" aria-label="${name} options"><span></span></button>` : '')
          }
          return `<style>
            :host { display: flex; align-items: center; flex: none; }
            ${button}
            button { width: 31px; height: 28px; display: grid; place-items: center; }
            .on { background: linear-gradient(#c9c9cc, #f2f2f2); border-radius: 4px; }
            .more { width: 22px; padding-left: 6px; font-size: 16px; line-height: 20px; }
            .drop { width: 10px; }
            .drop span { width: 8px; height: 6px; background: #9c1313; clip-path: polygon(0 0, 100% 0, 50% 100%); }
            .grip { width: 6px; height: 22px; margin: 0 1px; background: repeating-linear-gradient(90deg, #999 0 1px, #f4f4f4 1px 3px); }
            .sep { width: 1px; height: 22px; margin: 0 1px; background: #999; }
            .gap { width: 7px; }
            .big { width: 34px; }
          </style>${this.getAttribute('items').split(' ').map(cell).join('')}`
        }
      })

      customElements.define('drop-down', class extends Part {
        render () {
          const ic = this.getAttribute('icon')
          return `<style>
            :host { display: flex; align-items: center; box-sizing: border-box; height: 24px; border: 1px solid #aaa; border-top-color: #666; border-radius: 4px; background: #fff; overflow: hidden; }
            :host([size=wide]) { width: 144px; }
            :host([size=mid]) { width: 110px; }
            :host([size=fill]) { height: 20px; flex: none; }
            select { flex: 1; min-width: 0; appearance: none; border: 0; background: none; font: inherit; color: inherit; padding: 0 4px; height: 100%; outline: 0; }
            span { width: 16px; align-self: stretch; display: grid; place-items: center; background: linear-gradient(90deg, #b50c0c, #d51414); flex: none; }
            span::before { content: ""; width: 8px; height: 5px; background: #fff; clip-path: polygon(0 0, 100% 0, 50% 100%); }
            svg { flex: none; margin-left: 2px; }
          </style>${ic ? (ic === 'm2' ? swatch(LAYERS[10], 16) : icon(ic, 14)) : ''}
          <select aria-label="${this.getAttribute('label')}"><option>${this.getAttribute('value')}</option></select><span></span>`
        }
      })

      customElements.define('search-box', class extends Part {
        render () {
          return `<style>
            :host { display: flex; align-items: center; gap: 4px; box-sizing: border-box; height: 20px; flex: 1; min-width: 0; }
            label { flex: 1; min-width: 0; display: flex; align-items: center; height: 18px; border: 1px solid #aaa; border-top-color: #666; border-radius: 4px; overflow: hidden; background: #fff; padding-left: 3px; }
            input { flex: 1; min-width: 0; width: 10px; border: 0; background: none; font: inherit; padding: 0 4px; }
            input::placeholder { color: #c4c4c4; }
            svg { flex: none; }
            .red { width: 16px; align-self: stretch; display: grid; place-items: center; background: linear-gradient(90deg, #b50c0c, #d51414); flex: none; }
            .red::before { content: ""; width: 8px; height: 5px; background: #fff; clip-path: polygon(0 0, 100% 0, 50% 100%); }
            .caret { width: 8px; height: 5px; margin: 0 5px 0 2px; background: #9c1313; clip-path: polygon(0 0, 100% 0, 50% 100%); }
          </style><label>${icon('mag', 14)}<input aria-label="Search" placeholder="${this.getAttribute('hint')}"><span class="red"></span></label><span class="caret"></span>`
        }
      })

      customElements.define('cursor-readout', class extends Part {
        render () {
          const field = (n, v) => `<label>${n}<input value="${v}" readonly></label>`
          return `<style>
            :host { display: flex; align-items: center; gap: 10px; flex: none; }
            div { display: flex; }
            label { display: flex; align-items: center; gap: 3px; padding-left: 2px; }
            input { box-sizing: border-box; width: 65px; height: 26px; padding: 0 5px; border: 1px solid #ccc; border-top-color: #777; border-radius: 3px; font: inherit; color: inherit; background: #fff; }
            .xy { border-left: 1px solid #999; margin-left: -6px; }
            .cmd { margin: 0 6px 0 3px; }
          </style>
          <span>(F)Select:1</span><span>Sel(N):0</span><span>Sel(I):1</span><span>Sel(O):0</span>
          <div class="xy">${field('X', '16.849')}${field('Y', '-8.307')}${field('dX', '0.000')}${field('dY', '0.000')}</div>
          <span>Dist:0.000</span><span class="cmd">Cmd:Move</span>`
        }
      })

      customElements.define('dock-title', class extends Part {
        render () {
          return `<style>
            :host { display: flex; align-items: center; box-sizing: border-box; height: 19px; flex: none; padding: 0 1px 0 12px; border: 1px solid #777; border-left-color: #444; background: linear-gradient(#fff, #c9c9c9); font-weight: bold; font-size: 11px; }
            span { flex: 1; }
            ${button}
            button { width: 14px; height: 15px; border-radius: 4px; background: #f6f6f6; border: 1px solid #bbb; box-sizing: border-box; display: grid; place-items: center; font-weight: bold; line-height: 12px; margin-left: 1px; color: #000; }
          </style><span><slot></slot></span>
          ${this.hasAttribute('help') ? '<button aria-label="Help">?</button>' : ''}
          <button aria-label="Float"><svg width="9" height="9"><path d="M1 4h4v4H1zM3 4V1h5v5H5" fill="none" stroke="#000"/></svg></button>
          <button aria-label="Close"><svg width="9" height="9"><path d="M1 1l7 7M8 1L1 8" stroke="#000" stroke-width="2"/></svg></button>`
        }
      })

      // name, frame colour, ground, mark colour, mark
      const X = 'M3 3l9 9M12 3l-9 9'
      const HATCH = 'M2 9l7-7M4 13L13 4M9 13l4-4'
      const BACK = 'M2 5l8 8M5 2l8 8M10 2l3 3'
      const DOTS = 'M3 4h1M7 4h1M11 4h1M5 6h1M9 6h1M3 8h1M7 8h1M11 8h1M5 10h1M9 10h1M3 12h1M7 12h1M11 12h1'
      const LAYERS = [
        ['GT', '#00009b', '#000080', '#00005a', DOTS],
        ['DUMGT', '#5a1414', '#000', '#fff', X],
        ['DG', '#fff', '#000', '#fff', 'M4 4h1M9 5h2M5 10h2M11 10h1M7 8h1'],
        ['HRP', '#f3b0ac', '#000', '#f3b0ac', 'M2 3h11M2 12h11M3 2v11M12 2v11'],
        ['SN', '#3b9ae0', '#000', '#3b9ae0', 'M3 3l9 9M2 3h11M3 2v11M2 12h11M12 2v11'],
        ['SP', '#f4ea3c', '#000', '#f4ea3c', 'M2 3h11M3 2v11M2 12h11M12 2v11M6 6h3M6 7h3'],
        ['SAB', '#c03020', '#200', '#c03020', 'M2 3h11M2 12h11M3 2v11M12 2v11M7 7h1'],
        ['VSIA', '#8a2a84', '#000', '#fff', DOTS],
        ['CT', '#35a23a', '#1c6a22', '#58d05c', DOTS],
        ['M1', '#5dbada', '#000', '#7fd4f0', 'M4 4h1M10 5h1M7 8h1M4 11h1M11 11h1'],
        ['M2', '#24453a', '#0b1310', '#4e8a74', HATCH],
        ['M3', '#b5522a', '#150500', '#d98254', BACK],
        ['M4', '#f2dcf2', '#000', '#fff', HATCH],
        ['M5', '#efe88a', '#000', '#efe88a', BACK],
        ['M6', '#3a0c0a', '#100', '#7d1d16', 'M3 3l9 9'],
        ['V1', '#4a2fc0', '#2b1a90', '#130a50', DOTS],
        ['V2', '#d44bd4', '#b030b0', '#f4a0f4', DOTS],
        ['V3', '#d9c35a', '#000', '#e8dc90', X],
        ['V4', '#2f8a5a', '#02140a', '#3fae74', X],
        ['V5', '#0a0a90', '#000060', '#1a1ab0', X],
        ['PA', '#cfc06a', '#000', '#e8dc90', X],
        ['M1TXT', '#3e7fae', '#000', '#7ab8e0', 'M2 5h11M2 9h11M6 2v3M10 5v4M5 9v4']
      ]
      function swatch ([, frame, ground, mark, d], size) {
        return `<svg class="swatch" width="${size}" height="${size}" viewBox="0 0 15 15" shape-rendering="crispEdges"><rect width="15" height="15"/><rect x="1.5" y="1.5" width="12" height="12" fill="${ground}" stroke="${frame}"/><path d="${d}" stroke="${mark}" fill="none"/></svg>`
      }

      customElements.define('layer-palette', class extends Part {
        render () {
          const row = l => `<tr class="${l[0] === 'M2' ? 'cur' : ''}"><td>${swatch(l, 15)}</td><td>${l[0]}</td><td>drw</td><td><input type="checkbox" checked aria-label="${l[0]} visible"></td><td><input type="checkbox" checked aria-label="${l[0]} selectable"></td></tr>`
          return `<style>
            :host { display: flex; flex: none; background: #e2e2e2; border-left: 1px solid #555; }
            .panel { width: 174px; display: flex; flex-direction: column; min-height: 0; background: #fff; }
            .split { width: 7px; background: #e2e2e2; border-left: 1px solid #999; }
            ${button}${tick}
            .checks { display: flex; align-items: center; justify-content: space-between; height: 21px; padding: 0 14px 0 1px; flex: none; }
            .checks label { display: flex; align-items: center; gap: 6px; }
            .modes { display: flex; align-items: center; justify-content: space-between; height: 22px; padding: 0 1px 0 11px; flex: none; }
            .modes button { display: flex; align-items: center; gap: 10px; }
            .modes i { width: 8px; height: 5px; background: #9c1313; clip-path: polygon(0 0, 100% 0, 50% 100%); }
            .grid { flex: 1; min-height: 0; display: flex; overflow: hidden; border-top: 2px solid #222; }
            table { flex: 1; border-collapse: collapse; table-layout: fixed; width: 157px; align-self: flex-start; }
            th { height: 17px; padding: 0; font-weight: normal; background: linear-gradient(#a9a9a9, #d8d8d8); border-right: 1px solid #777; }
            td { height: 17px; padding: 0; line-height: 15px; white-space: nowrap; }
            td:first-child { padding-left: 3px; }
            td:nth-child(2) { padding-left: 5px; }
            td:nth-child(3) { padding-left: 3px; }
            td:nth-child(n+4) { padding-left: 4px; }
            .cur { outline: 2px solid #000; outline-offset: -2px; }
            .bar { width: 17px; flex: none; background: #989898; display: flex; flex-direction: column; justify-content: space-between; align-items: center; }
            .bar i { width: 15px; height: 16px; background: #e6e6e6; display: grid; place-items: center; color: #888; font: 9px/16px "DejaVu Sans", sans-serif; }
            .bar .thumb { height: 28px; border-radius: 8px; background: repeating-linear-gradient(#ddd 0 2px, #999 2px 3px); border: 4px solid #ddd; border-width: 9px 4px; box-sizing: border-box; margin: 0 0 220px; }
            .foot { height: 4px; background: #ddd; flex: none; border-top: 1px solid #aaa; }
            .objects { position: relative; height: 30px; flex: none; border-top: 2px solid #222; overflow: hidden; display: flex; }
            .objects table { margin-top: -5px; }
            .objects th { height: 21px; font-weight: bold; }
            .objects td:nth-child(n+2) { padding-left: 5px; }
            .tabs { position: absolute; left: 0; bottom: 0; display: flex; border-top: 1px solid #111; width: 112px; }
            .tabs button { height: 21px; padding: 0 9px; border-right: 1px solid #999; background: #fff; }
            .tabs button + button { height: 18px; background: #ddd; }
          </style>
          <div class="panel">
            <dock-title help>Palette</dock-title>
            <dock-title>Layers</dock-title>
            <drop-down size="fill" icon="filter" label="Layer set" value="All Layers"></drop-down>
            <div class="checks">
              <label><input type="checkbox" checked>Valid</label>
              <label><input type="checkbox">Used</label>
              <label><input type="checkbox">Routing</label>
            </div>
            <search-box hint="Filter" style="flex: none"></search-box>
            <drop-down size="fill" icon="m2" label="Entry layer" value="M2 drawing"></drop-down>
            <div class="modes">${['AV', 'NV', 'AS', 'NS'].map(t => `<button>${t}<i></i></button>`).join('')}</div>
            <div class="grid">
              <table>
                <colgroup><col style="width: 18px"><col style="width: 67px"><col style="width: 32px"><col style="width: 22px"><col></colgroup>
                <thead><tr><th></th><th>Layer</th><th>Pu...</th><th>V</th><th>S</th></tr></thead>
                <tbody>${LAYERS.map(row).join('')}</tbody>
              </table>
              <div class="bar"><i>△</i><i class="thumb"></i><i>▽</i></div>
            </div>
            <div class="foot"></div>
            <dock-title>Objects</dock-title>
            <div class="objects">
              <table>
                <colgroup><col><col style="width: 22px"><col style="width: 22px"></colgroup>
                <thead><tr><th>Objects</th><th>V</th><th>S</th></tr></thead>
                <tbody><tr><td></td><td><input type="checkbox" checked aria-label="Object visible"></td><td><input type="checkbox" checked aria-label="Object selectable"></td></tr></tbody>
              </table>
              <div class="bar"><i>△</i><i>▽</i></div>
              <div class="tabs"><button>Objects</button><button>Grids</button></div>
            </div>
          </div>
          <div class="split"></div>`
        }
      })

      // ---- drawing of the cells, three units to one screen pixel ----
      const DIM = { rail: '#176a8a', frame: '#a8962c', ground: '#3c3812', bar: '#120e72', dot: '#7a3a70', teal: '#1f8a7a', wire: '#1f5a48', blue: '#0e3252', foot: '#6a7a2a', edge: '#6a1a74' }
      const LIT = { rail: '#3cc4f4', frame: '#fff04a', ground: '#c8b820', bar: '#20109a', dot: '#ff9ad8', teal: '#78f0f0', wire: '#5a9a84', blue: '#2f9ae8', foot: '#c8f03a', edge: '#e080c0' }
      const bar = (c, x, y, w, h) => {
        let s = P(`M${x - 4} ${y}v${h}M${x + w + 4} ${y}v${h}`, c.frame === LIT.frame ? '#fff' : '#6d6a50', 'none', 2, 'stroke-dasharray="9 6"') + R(x, y, w, h, c.bar)
        for (let i = 6; i < h - 4; i += 14) s += P(`M${x + w / 2} ${y + i}l4 7M${x + 3} ${y + i + 6}l4 -5`, c.dot, 'none', 3)
        return s
      }
      const rail = (c, x, y, w, h) => R(x, y, w, h, c.rail) + P(`M${x} ${y + 2}h${w}`, '#000', 'none', 2, 'stroke-dasharray="12 30"') + P(`M${x + 6} ${y + h - 9}h${w - 12}`, '#042a3a', 'none', 3, 'stroke-dasharray="26 6"')
      const block = (c, x, w) => R(x, 28, w, 133, c.ground, c.frame, 6) + P(`M${x - 2} 30v133h${w + 4}V30`, c.edge, 'none', 3, 'stroke-dasharray="8 6"') + P(`M${x + 7} 36H${x + w - 7}V154H${x + 7}z`, '#1a1a08', 'none', 3, 'stroke-dasharray="5 3"')
      const sea = (c, x, w) => R(x, 245, w, 74, c.blue, c.rail, 3) + P(`M${x} 252h${w}M${x} 310h${w}`, '#000', 'none', 3, 'stroke-dasharray="6 9"')
      const slot = (c, x, y, h) => R(x, y, 9, h, '#101608', c.teal, 3)
      const wires = (c, ds) => ds.map(d => P(d, c.wire, 'none', 10) + P(d, '#04100a', 'none', 5, 'stroke-dasharray="20 3"')).join('')
      const foot = (c, w) => R(3, 322, w, 15, '#070b04', c.foot, 4) + P(`M8 330h${w - 10}`, c.foot, 'none', 2, 'stroke-dasharray="4 8"')

      const andCell = c => rail(c, 0, 2, 167, 26) + block(c, 5, 156) +
        bar(c, 25, 34, 22, 120) + bar(c, 73, 40, 16, 110) + bar(c, 118, 34, 28, 120) +
        [12, 56, 98].map(x => slot(c, x, 44, 104)).join('') +
        wires(c, ['M42 163v82', 'M84 163v82', 'M66 106h58v140', 'M153 112v136']) +
        sea(c, 5, 157) + bar(c, 26, 250, 24, 62) + bar(c, 72, 250, 22, 62) + bar(c, 118, 250, 26, 62) +
        [12, 56, 102, 150].map(x => slot(c, x, 256, 52)).join('') + wires(c, ['M20 290h130']) + foot(c, 158)

      const orCell = c => rail(c, 0, 2, 296, 24) + block(c, 8, 198) + block(c, 231, 72) +
        bar(c, 30, 34, 24, 120) + bar(c, 76, 40, 16, 110) + bar(c, 116, 40, 16, 110) + bar(c, 160, 34, 24, 120) + bar(c, 250, 34, 32, 120) +
        [18, 62, 104, 144, 190, 238, 288].map(x => slot(c, x, 44, 104)).join('') +
        wires(c, ['M14 162v84', 'M46 246V142h126v10', 'M88 162v84', 'M136 162v44h26v42', 'M176 156v28h34v62', 'M154 150V47h92', 'M260 160v42h28v44', 'M296 118h26v88', 'M336 206v80h-40']) +
        sea(c, 4, 112) + sea(c, 126, 110) + sea(c, 250, 66) +
        [20, 68, 142, 192, 264].map(x => bar(c, x, 250, 28, 62)).join('') +
        [10, 54, 100, 130, 176, 224, 300].map(x => slot(c, x, 256, 52)).join('') +
        wires(c, ['M20 303h290', 'M90 262h74']) + P('M226 282h84', '#b5561a', 'none', 5, 'stroke-dasharray="10 3"') + foot(c, 318)

      customElements.define('layout-canvas', class extends Part {
        render () {
          const at = (x, y, body) => `<g transform="translate(${x} ${y}) scale(.3333)">${body}</g>`
          return `<style>
            :host { display: block; background: #000; overflow: hidden; }
            svg { display: block; width: 100%; height: 100%; }
          </style>
          <svg role="img" aria-label="Layout of add_12">
            <defs><pattern id="dots" width="45.17" height="45.17" patternUnits="userSpaceOnUse"><path d="M4 16.500h3M5.500 15v3" stroke="#8a8a8a"/></pattern></defs>
            <rect width="100%" height="100%" fill="url(#dots)"/>
            <path d="M0 16.500H3000" stroke="#767676"/>
            <path d="M231.500 0V3000" stroke="#868686"/>
            ${at(158, 44, andCell(DIM))}
            ${at(235, 45, orCell({ ...DIM, foot: '#1f7a6a' }))}
            ${at(364, 43, andCell(LIT) + R(0, 0, 165, 335, 'none', '#fff', 4))}
            ${at(434, 40, orCell(DIM))}
            ${at(459, 403, andCell(DIM))}
            <path d="M500 480l4 5h-8zM500 497l4-5h-8zM491 488l5-4v8zM509 488l-5-4v8z" fill="#000" stroke="#fff" stroke-dasharray="2 1"/>
          </svg>`
        }
      })

      customElements.define('annotation-browser', class extends Part {
        render () {
          const nets = [['A (2)', '#ff20f4'], ['B (2)', '#fdf6cc'], ['C (2)', '#00eefc'], ['CI (1)', '#ff8a00'], ['S (1)', '#00e000'], ['VDD (5)', '#ff8a00'], ['VSS (5)', '#ffffe0'], ['net33 (2)', '#ff20f4'], ['net38 (1)', '#fbd8fb'], ['net39 (1)', '#ffffff']]
          const box = plus => `<svg width="16" height="10"><path d="M.5.5h9v9h-9zM2 5h6${plus ? 'M5 2v6' : ''}" fill="none" stroke="#222"/><path d="M11 5h5" stroke="#777" stroke-dasharray="1 1"/></svg>`
          return `<style>
            :host { display: flex; flex: none; width: 295px; }
            .split { width: 6px; background: #e2e2e2; box-sizing: border-box; border-right: 2px solid #bbb; }
            .panel { flex: 1; min-width: 0; display: flex; flex-direction: column; background: #fff; border-right: 2px solid #777; }
            ${tick}
            ${button}
            tool-bar { height: 23px; padding: 0 3px; }
            tool-bar button { width: 25px; display: grid; place-items: center; }
            tool-bar i { width: 1px; height: 14px; background: #888; margin: 0 -1px; }
            tool-bar .caret { width: 8px; height: 6px; margin: 0 6px 0 0; background: #9c1313; clip-path: polygon(0 0, 100% 0, 50% 100%); }
            .scope { display: flex; align-items: center; gap: 4px; height: 25px; flex: none; }
            .scope drop-down { width: 163px; height: 20px; }
            .tabs { display: flex; align-items: flex-end; height: 22px; flex: none; position: relative; overflow: hidden; }
            .tabs button { height: 20px; padding: 0 7px; background: #dedede; border-right: 1px solid #aaa; border-top: 1px solid #ccc; white-space: nowrap; }
            .tabs button:first-child { background: #fff; height: 22px; }
            .tabs > button:nth-child(3) { flex: 1; text-align: left; border-right: 0; }
            .tabs div { position: absolute; right: 0; top: 2px; display: flex; }
            .tabs div button { width: 15px; height: 20px; padding: 0; border: 1px solid #bbb; border-radius: 6px; background: #eee; font: 9px/18px "DejaVu Sans", sans-serif; color: #aaa; }
            .tabs div button + button { color: #b01010; }
            .list { flex: 1; margin: 1px 1px 0; border: 2px solid #1a1a1a; border-top-width: 3px; }
            table { width: 100%; border-collapse: collapse; table-layout: fixed; }
            th { height: 17px; padding: 0; background: linear-gradient(#a4a4a4, #d4d4d4); border-right: 1px solid #888; font-size: 11px; line-height: 16px; }
            th svg { margin: 0 auto 0 3px; }
            td { height: 17px; padding: 0; line-height: 16px; }
            td div { display: flex; align-items: center; gap: 4px; padding-left: 5px; white-space: nowrap; }
            tr + tr td div { padding-left: 25px; }
            .dot { display: block; width: 2px; height: 2px; border: 1px solid #111; margin: 0 auto; background: #bbb; }
            input[type=color] { appearance: none; display: block; box-sizing: border-box; width: 11px; height: 11px; margin: 0 auto; padding: 0; border: 1px solid #bbb; border-bottom-color: #333; background: none; }
            input::-webkit-color-swatch-wrapper { padding: 0; }
            input::-webkit-color-swatch { border: 0; }
            td input[type=checkbox] { width: 11px; margin: 0 0 0 7px; border-color: #fff #fff #777; }
            fieldset { margin: 4px 1px 3px; padding: 11px 2px 0; border: 1px solid #ccc; border-radius: 4px; height: 94px; box-sizing: border-box; min-width: 0; }
            .desc { border-top: 2px solid #ddd; margin-top: 3px; flex: none; }
            legend { margin-left: 4px; padding: 0 2px; color: #b51a0e; font-weight: bold; font-size: 11px; line-height: 16px; }
            textarea { display: block; width: 100%; height: 66px; box-sizing: border-box; border: 0 solid #111; border-width: 2px 0 0 2px; resize: none; }
          </style>
          <div class="split"></div>
          <div class="panel">
            <dock-title help>Annotation Browser</dock-title>
            <tool-bar>
              <button aria-label="Fit">${icon('fitview', 18)}</button><i class="caret"></i>
              <button aria-label="Zoom">${icon('fitpale', 18)}</button><i></i>
              <button aria-label="Previous">${icon('up', 18)}</button><button aria-label="Next">${icon('down', 18)}</button><i></i>
              <button aria-label="Select">${icon('pointer', 14)}</button><button aria-label="Show">${icon('blobs', 16)}</button><button aria-label="Hide">${icon('blobsx', 16)}</button><button aria-label="Clear">${icon('halt', 16)}</button>
            </tool-bar>
            <div class="scope"><b>Scope:</b><drop-down label="Scope" value="Current Cellview Only"></drop-down><search-box hint="Sea"></search-box></div>
            <div class="tabs"><button>Connectivity (22/22)</button><button>DRC/DFM (0/0)</button><button>Constra</button>
              <div><button aria-label="Previous tab">◀</button><button aria-label="Next tab">▶</button></div>
            </div>
            <div class="list">
              <table>
                <colgroup><col><col style="width: 27px"><col style="width: 27px"><col style="width: 26px"></colgroup>
                <thead><tr><th>Type/Nets</th><th>${icon('view', 14)}</th><th>${icon('picks', 14)}</th><th>${icon('flag', 14)}</th></tr></thead>
                <tbody>
                  <tr><td><div>${box(false)}Incomplete Nets (10)(22)</div></td><td><i class="dot"></i></td><td><i class="dot"></i></td><td><input type="checkbox" aria-label="Flag all"></td></tr>
                  ${nets.map(([n, c]) => `<tr><td><div>${box(true)}${n}</div></td><td><i class="dot"></i></td><td><input type="color" value="${c}" aria-label="${n} colour"></td><td><input type="checkbox" aria-label="Flag ${n}"></td></tr>`).join('')}
                </tbody>
              </table>
            </div>
            <div class="desc"><fieldset><legend>Description</legend><textarea aria-label="Description" readonly></textarea></fieldset></div>
          </div>`
        }
      })

      customElements.define('status-rows', class extends Part {
        render () {
          return `<style>
            :host { display: block; flex: none; }
            div { display: flex; align-items: center; box-sizing: border-box; border-bottom: 1px solid #8d8d8d; background: linear-gradient(#f6f6f6, #c8c8c8); }
            .sel { height: 31px; padding: 1px 0 0 4px; gap: 11px; }
            .grip { width: 6px; height: 20px; margin-right: -6px; background: repeating-linear-gradient(90deg, #999 0 1px, #f4f4f4 1px 3px); }
            .mouse { height: 18px; display: grid; grid-template-columns: 1fr auto 1fr; padding: 0 8px 2px 11px; }
            .mouse :last-child { text-align: right; }
            .prompt { height: 21px; padding-top: 1px; background: #fff; border-bottom-color: #555; }
            .prompt b { font-weight: normal; background: #fdeaea; padding: 2px 5px; border-right: 1px solid #888; margin-right: 10px; }
            .prompt span { flex: 1; }
            .prompt em { font-style: normal; border-left: 1px solid #555; padding: 1px 9px 1px 7px; }
            .prompt i { width: 6px; height: 16px; background: #999; border-right: 1px solid #555; margin-right: 4px; }
          </style>
          <div class="sel"><i class="grip"></i><span>Select:</span><span>Inst</span><span>Name(I3)</span><span>CellName(and)</span></div>
          <div class="mouse"><span>mouse L: Enter Point</span><span>M: Rotate 90</span><span>R: Pop-up Menu</span></div>
          <div class="prompt"><b>40(54)</b><span>Point at the new location for the move:</span><em>Cmd: Move</em><i></i></div>`
        }
      })

      customElements.define('task-bar', class extends Part {
        render () {
          const tasks = [['term', '[work@work-eda:...'], ['term', '[work@work-eda:~...'], ['term', 'houfang_XOR - File...'], ['termdark', 'work@work-eda:~/...'], ['virtdoc', '[virtuoso]'], ['window', 'Cadence Library M...'], ['virt', 'add'], ['virt', 'add_12'], ['virt', 'add_12 *']]
          return `<style>
            :host { display: flex; align-items: center; box-sizing: border-box; height: 38px; flex: none; padding: 0 3px 0 4px; background: #fff; border-bottom: 1px solid #555; font: 13px/20px "DejaVu Sans", sans-serif; }
            ${button}
            .grip { width: 5px; height: 20px; margin-right: 9px; background: radial-gradient(circle, #aaa 1px, transparent 1px) 0 0 / 3px 4px; }
            .hat { display: flex; align-items: flex-start; width: 62px; padding-left: 3px; }
            .pager { display: flex; gap: 1px; height: 34px; box-sizing: border-box; width: 212px; margin-right: 10px; border: 1px solid #888; border-radius: 3px; overflow: hidden; background: #fff; }
            .pager button { flex: 1; display: grid; place-items: center; background: #b3aea8; }
            .pager button:first-child { background: #dcf0fd; }
            .tasks { flex: 1; min-width: 0; display: grid; grid-template-columns: repeat(9, 1fr); gap: 2px; }
            .tasks button { display: flex; align-items: center; gap: 8px; height: 34px; min-width: 0; padding: 0 6px; border: 1px solid #888; border-radius: 3px; background: linear-gradient(#fff, #fafafa); white-space: nowrap; }
            .tasks button:last-child { background: linear-gradient(#c9c6c3, #dedcda); }
            .pager + .grip { margin-right: 4px; }
          </style>
          <i class="grip"></i>
          <button class="hat" aria-label="Applications">${icon('redhat', 32)}<svg width="10" height="8"><path d="M0 7l4-5 5 5" fill="none" stroke="#222"/></svg></button>
          <div class="pager"><button aria-label="Workspace 1">${icon('virt', 18)}</button><button aria-label="Workspace 2"></button><button aria-label="Workspace 3"></button></div>
          <i class="grip"></i>
          <div class="tasks">${tasks.map(([i, t]) => `<button>${icon(i, 16)}${t}</button>`).join('')}</div>`
        }
      })

      customElements.define('vm-status', class extends Part {
        render () {
          return `<style>
            :host { display: flex; align-items: center; flex: none; height: 26px; padding: 0 27px 0 1px; background: #f5f7fa; border-bottom: 2px solid; border-image: linear-gradient(90deg, #a9cfe2 0 18%, #0d4a80 18% 30%, #123a63 50%, #0f6aa0 70%, #0a2748 78%, #b7cbd8 78%) 2; color: #111; font: 15px/22px "Noto Sans", "Noto Sans CJK SC", sans-serif; }
            span { flex: 1; }
            svg { margin-left: 7px; }
            i { width: 1px; height: 20px; margin: 0 2px 0 8px; background: #aaa; }
          </style><span><slot></slot></span>
          ${['disk', 'cd', 'net', 'printer', 'sound', 'cam'].map(n => icon(n, 18)).join('')}<i></i>${icon('note', 18)}`
        }
      })
    </script>
  </body>
</html>
